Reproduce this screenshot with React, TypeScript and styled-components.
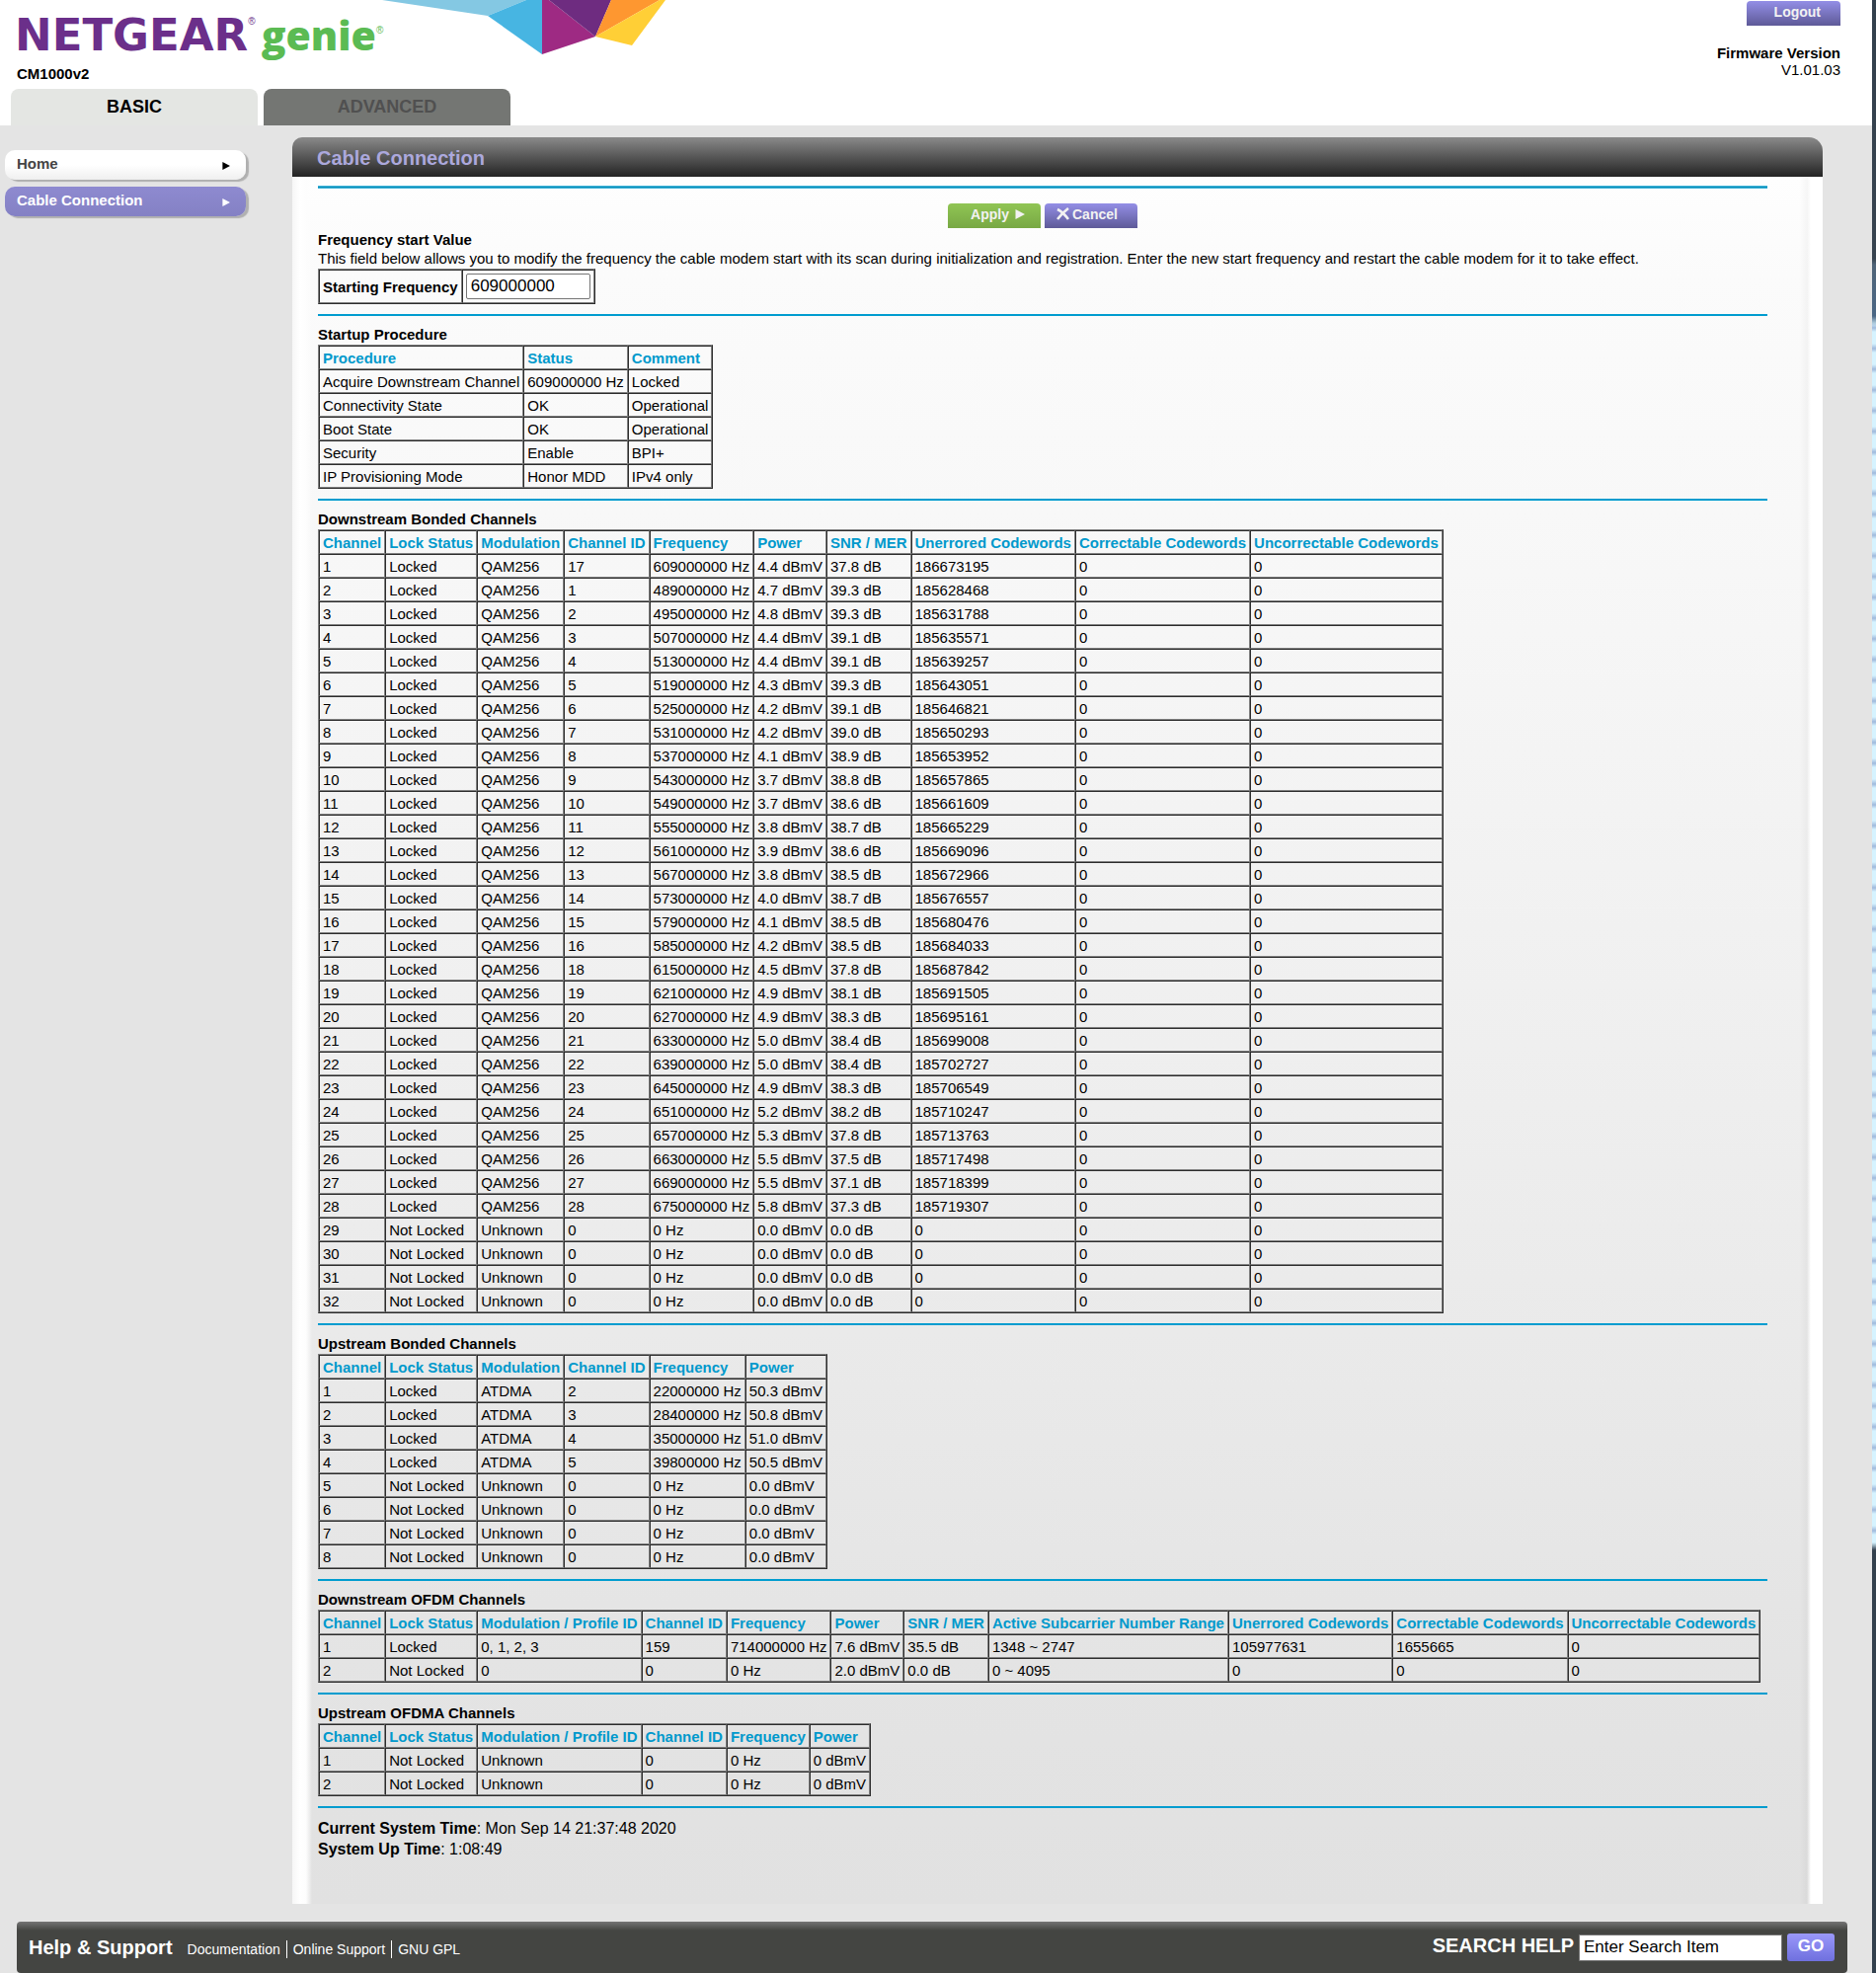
import React from 'react';
import styled, { createGlobalStyle } from 'styled-components';

const sans = '"Liberation Sans", Arial, Helvetica, sans-serif';

const GlobalStyle = createGlobalStyle`
  * { box-sizing: border-box; }
  body {
    margin: 0;
    background: #e4e4e4;
    color: #000;
    font: 15px/19px ${sans};
  }
`;

const Screen = styled.div`
  display: flex;
  min-height: 100vh;
`;

const Page = styled.div`
  flex: 1;
  min-width: 0;
  display: flex;
  flex-direction: column;
`;

const DesktopEdge = styled.div`
  width: 4px;
  background:
    linear-gradient(#33404d 0, #37434f 262px, #4f6478 268px, #4a6684 320px, transparent 330px, transparent 1562px, #33404d 1570px),
    repeating-linear-gradient(#d6f3ff 0, #d6f3ff 12px, #9fb9dc 17px, #d6f3ff 21px);
`;

const Header = styled.header`
  display: flex;
  justify-content: space-between;
  height: 127px;
  background: #fff;
`;

const Brand = styled.div`
  display: flex;
  flex-direction: column;
`;

const LogoRow = styled.div`
  display: flex;
  align-items: flex-start;
  height: 66px;
`;

const Logo = styled.div`
  display: flex;
  align-items: baseline;
  width: 370px;
  padding-left: 15px;
`;

const Netgear = styled.span`
  color: #6b2f8a;
  font: bold 45px/70px "DejaVu Sans", ${sans};
`;

const Genie = styled.span`
  margin-left: 6px;
  color: #5bbb53;
  font: 800 41px/70px "Open Sans", ${sans};
`;

const Mark = styled.sup<{ $color: string; $line: number }>`
  align-self: flex-start;
  color: ${(p) => p.$color};
  font-size: 10px;
  line-height: ${(p) => p.$line}px;
`;

const Prism = styled.svg`
  display: block;
  width: 304px;
  height: 66px;
`;

const Model = styled.div`
  padding-left: 17px;
  font-weight: bold;
  line-height: 18px;
`;

const Tabs = styled.nav`
  display: flex;
  gap: 6px;
  margin-top: auto;
  padding-left: 11px;
`;

const Tab = styled.button<{ $active?: boolean }>`
  width: 250px;
  height: 37px;
  padding: 0 0 2px;
  border: 0;
  border-radius: 8px 8px 0 0;
  background: ${(p) => (p.$active ? '#e4e6e3' : '#747673')};
  color: ${(p) => (p.$active ? '#000' : '#505050')};
  font: bold 18px/20px ${sans};
`;

const Account = styled.div`
  display: flex;
  flex-direction: column;
  align-items: flex-end;
  padding: 1px 32px 0 0;
  line-height: 17px;
`;

const ActionButton = styled.button<{ $green?: boolean }>`
  display: flex;
  align-items: center;
  justify-content: flex-end;
  gap: 6px;
  width: 94px;
  height: 25px;
  padding: 0 16px 4px 12px;
  border: 0;
  border-radius: 4px 4px 0 0;
  background: ${(p) =>
    p.$green ? 'linear-gradient(#90c554, #78a844)' : 'linear-gradient(#938ee6, #5e5a98)'};
  color: #f2f2f2;
  font: bold 14px/16px ${sans};
`;

const CancelButton = styled(ActionButton)`
  justify-content: flex-start;
  gap: 3px;
`;

const LogoutButton = styled(ActionButton)`
  width: 95px;
  padding-right: 20px;
`;

const Firmware = styled.div`
  padding-top: 19px;
  text-align: right;
`;

const Body = styled.div`
  display: flex;
  flex: 1;
  padding: 12px 50px 18px 5px;
`;

const Menu = styled.nav`
  display: flex;
  flex-direction: column;
  gap: 7px;
  width: 291px;
  padding-top: 13px;
`;

const MenuLink = styled.a<{ $active?: boolean }>`
  display: flex;
  align-items: center;
  justify-content: space-between;
  width: 244px;
  height: 30px;
  padding: 0 16px 3px 12px;
  border-radius: 10px;
  background: ${(p) =>
    p.$active ? 'linear-gradient(#8e8ad0, #8481c4)' : 'linear-gradient(#fff 50%, #efefef)'};
  box-shadow: 3px 2px 1px #b0b0b0;
  color: ${(p) => (p.$active ? '#fff' : '#444')};
  font-weight: bold;
  line-height: 18px;
  text-decoration: none;
  svg { margin-top: 4px; }
`;

const Panel = styled.main`
  flex: 1;
  min-width: 0;
  display: flex;
  flex-direction: column;
`;

const PanelTitle = styled.h1`
  height: 40px;
  margin: 0;
  padding-left: 25px;
  border-radius: 10px 14px 0 0;
  background: linear-gradient(#8a8a8a, #232323);
  color: #aca8dc;
  font: bold 20px/42px ${sans};
`;

const PanelBody = styled.div`
  flex: 1;
  padding: 9px 56px 40px 26px;
  background:
    linear-gradient(90deg, #f6f6f6, #fff 8px, #fdfdfd 14px, rgba(255, 255, 255, 0) 20px),
    linear-gradient(270deg, #fff 12px, rgba(0, 0, 0, 0.03) 16px, rgba(0, 0, 0, 0) 24px),
    linear-gradient(#fefefe 0, #fbfbfb 100px, #f8f8f8 340px, #ececec 1060px, #e4e4e4 1500px, #e1e1e1);
`;

const TopRule = styled.hr`
  height: 3px;
  margin: 0;
  border: 0;
  background: linear-gradient(#3fb3d9 1px, #0a8fb9 1px, #0a8fb9 2px, #3fb3d9 2px);
`;

const Rule = styled.hr`
  height: 2px;
  margin: 10px 0;
  border: 0;
  background: #009ccf;
`;

const Actions = styled.div`
  display: flex;
  justify-content: center;
  gap: 4px;
  padding: 15px 0 3px;
`;

const Heading = styled.h2`
  margin: 0;
  padding-bottom: 2px;
  font: bold 15px/17px ${sans};
`;

const Note = styled.p`
  margin: 0;
  padding-bottom: 2px;
  line-height: 17px;
`;

const Grid = styled.table`
  border: 1px outset gray;
  border-spacing: 0;
  line-height: 16px;
  th, td {
    padding: 4px 3px 2px;
    border: 1px inset gray;
    text-align: left;
    white-space: nowrap;
  }
  thead th { color: #0099cc; }
`;

const FieldCell = styled.td`
  && { padding: 3px; }
`;

const FrequencyInput = styled.input`
  display: block;
  width: 126px;
  height: 26px;
  padding: 0 4px;
  border: 1px solid #767676;
  border-radius: 2px;
  background: #fff;
  font: 17px/20px ${sans};
`;

const Times = styled.div`
  font-size: 16px;
  line-height: 21px;
`;

const Footer = styled.footer`
  display: flex;
  align-items: center;
  justify-content: space-between;
  height: 52px;
  margin: 0 25px 0 17px;
  padding: 0 13px 0 12px;
  border-radius: 4px;
  background: linear-gradient(#747474, #444542 9px);
  color: #fff;
`;

const FooterGroup = styled.div<{ $gap: number }>`
  display: flex;
  align-items: center;
  gap: ${(p) => p.$gap}px;
`;

const FooterTitle = styled.strong`
  font-size: 20px;
  line-height: 22px;
`;

const SearchLabel = styled.label`
  padding-bottom: 4px;
  font-size: 20px;
  font-weight: bold;
  line-height: 22px;
`;

const FooterLinks = styled.div`
  display: flex;
  padding-top: 4px;
`;

const FooterLink = styled.a`
  padding: 0 6px;
  border-left: 1px solid #fff;
  color: #fff;
  font-size: 14px;
  line-height: 18px;
  text-decoration: none;
  &:first-child { border-left: 0; }
`;

const SearchInput = styled.input`
  width: 206px;
  height: 27px;
  padding: 0 4px 1px;
  border: 1px solid #767676;
  background: #fff;
  color: #000;
  font: 17px/20px ${sans};
`;

const GoButton = styled.button`
  width: 48px;
  height: 28px;
  padding: 0 0 3px;
  border: 0;
  border-radius: 3px;
  background: linear-gradient(#9a98fa, #6f70de);
  color: #fff;
  font: bold 17px/20px ${sans};
`;

const startup = {
  head: ['Procedure', 'Status', 'Comment'],
  rows: [
    ['Acquire Downstream Channel', '609000000 Hz', 'Locked'],
    ['Connectivity State', 'OK', 'Operational'],
    ['Boot State', 'OK', 'Operational'],
    ['Security', 'Enable', 'BPI+'],
    ['IP Provisioning Mode', 'Honor MDD', 'IPv4 only'],
  ],
};

// channel id, MHz, dBmV, dB, unerrored codewords
const lockedDownstream: [number, number, string, string, number][] = [
  [17, 609, '4.4', '37.8', 186673195],
  [1, 489, '4.7', '39.3', 185628468],
  [2, 495, '4.8', '39.3', 185631788],
  [3, 507, '4.4', '39.1', 185635571],
  [4, 513, '4.4', '39.1', 185639257],
  [5, 519, '4.3', '39.3', 185643051],
  [6, 525, '4.2', '39.1', 185646821],
  [7, 531, '4.2', '39.0', 185650293],
  [8, 537, '4.1', '38.9', 185653952],
  [9, 543, '3.7', '38.8', 185657865],
  [10, 549, '3.7', '38.6', 185661609],
  [11, 555, '3.8', '38.7', 185665229],
  [12, 561, '3.9', '38.6', 185669096],
  [13, 567, '3.8', '38.5', 185672966],
  [14, 573, '4.0', '38.7', 185676557],
  [15, 579, '4.1', '38.5', 185680476],
  [16, 585, '4.2', '38.5', 185684033],
  [18, 615, '4.5', '37.8', 185687842],
  [19, 621, '4.9', '38.1', 185691505],
  [20, 627, '4.9', '38.3', 185695161],
  [21, 633, '5.0', '38.4', 185699008],
  [22, 639, '5.0', '38.4', 185702727],
  [23, 645, '4.9', '38.3', 185706549],
  [24, 651, '5.2', '38.2', 185710247],
  [25, 657, '5.3', '37.8', 185713763],
  [26, 663, '5.5', '37.5', 185717498],
  [27, 669, '5.5', '37.1', 185718399],
  [28, 675, '5.8', '37.3', 185719307],
];

const codewords = ['Unerrored Codewords', 'Correctable Codewords', 'Uncorrectable Codewords'];

const downstream = {
  head: ['Channel', 'Lock Status', 'Modulation', 'Channel ID', 'Frequency', 'Power', 'SNR / MER', ...codewords],
  rows: [
    ...lockedDownstream.map(([id, mhz, power, snr, words], i) => [
      `${i + 1}`, 'Locked', 'QAM256', `${id}`, `${mhz}000000 Hz`, `${power} dBmV`, `${snr} dB`, `${words}`, '0', '0',
    ]),
    ...[29, 30, 31, 32].map((n) => [
      `${n}`, 'Not Locked', 'Unknown', '0', '0 Hz', '0.0 dBmV', '0.0 dB', '0', '0', '0',
    ]),
  ],
};

const upstream = {
  head: ['Channel', 'Lock Status', 'Modulation', 'Channel ID', 'Frequency', 'Power'],
  rows: [
    ['1', 'Locked', 'ATDMA', '2', '22000000 Hz', '50.3 dBmV'],
    ['2', 'Locked', 'ATDMA', '3', '28400000 Hz', '50.8 dBmV'],
    ['3', 'Locked', 'ATDMA', '4', '35000000 Hz', '51.0 dBmV'],
    ['4', 'Locked', 'ATDMA', '5', '39800000 Hz', '50.5 dBmV'],
    ...[5, 6, 7, 8].map((n) => [`${n}`, 'Not Locked', 'Unknown', '0', '0 Hz', '0.0 dBmV']),
  ],
};

const downstreamOfdm = {
  head: ['Channel', 'Lock Status', 'Modulation / Profile ID', 'Channel ID', 'Frequency', 'Power', 'SNR / MER', 'Active Subcarrier Number Range', ...codewords],
  rows: [
    ['1', 'Locked', '0, 1, 2, 3', '159', '714000000 Hz', '7.6 dBmV', '35.5 dB', '1348 ~ 2747', '105977631', '1655665', '0'],
    ['2', 'Not Locked', '0', '0', '0 Hz', '2.0 dBmV', '0.0 dB', '0 ~ 4095', '0', '0', '0'],
  ],
};

const upstreamOfdma = {
  head: ['Channel', 'Lock Status', 'Modulation / Profile ID', 'Channel ID', 'Frequency', 'Power'],
  rows: [
    ['1', 'Not Locked', 'Unknown', '0', '0 Hz', '0 dBmV'],
    ['2', 'Not Locked', 'Unknown', '0', '0 Hz', '0 dBmV'],
  ],
};

type TableData = { head: string[]; rows: string[][] };

function Section({ title, data }: { title: string; data: TableData }) {
  return (
    <section>
      <Heading>{title}</Heading>
      <Grid aria-label={title}>
        <thead>
          <tr>{data.head.map((h) => <th key={h} scope="col">{h}</th>)}</tr>
        </thead>
        <tbody>
          {data.rows.map((row) => (
            <tr key={row[0]}>{row.map((cell, i) => <td key={i}>{cell}</td>)}</tr>
          ))}
        </tbody>
      </Grid>
      <Rule />
    </section>
  );
}

function Arrow({ color, size }: { color: string; size: number }) {
  return (
    <svg width={size} height={size} viewBox="0 0 10 10" aria-hidden="true">
      <path d="M0.5 0 L10 5 L0.5 10 Z" fill={color} />
    </svg>
  );
}

export default function App() {
  return (
    <Screen>
      <GlobalStyle />
      <Page>
        <Header>
          <Brand>
            <LogoRow>
              <Logo>
                <Netgear>NETGEAR</Netgear>
                <Mark $color="#6b2f8a" $line={44}>®</Mark>
                <Genie>genie</Genie>
                <Mark $color="#5bbb53" $line={62}>®</Mark>
              </Logo>
              <Prism viewBox="370 0 304 66" aria-hidden="true">
                <path d="M387 0 H533 L494 16 Z" fill="#84c8e3" />
                <path d="M533 0 H549 V55 L494 16 Z" fill="#47b5e2" />
                <path d="M549 0 H556 L603 37 L549 55 Z" fill="#9e2a83" />
                <path d="M556 0 H619 L603 37 Z" fill="#6e2c80" />
                <path d="M619 0 H668 L603 37 Z" fill="#fe9730" />
                <path d="M668 0 H674 L640 46 L603 37 Z" fill="#ffcf36" />
              </Prism>
            </LogoRow>
            <Model>CM1000v2</Model>
            <Tabs>
              <Tab $active>BASIC</Tab>
              <Tab>ADVANCED</Tab>
            </Tabs>
          </Brand>
          <Account>
            <LogoutButton>Logout</LogoutButton>
            <Firmware>
              <strong>Firmware Version</strong>
              <br />
              V1.01.03
            </Firmware>
          </Account>
        </Header>
        <Body>
          <Menu>
            <MenuLink href="#home">Home <Arrow color="#000" size={8} /></MenuLink>
            <MenuLink href="#cable" $active>Cable Connection <Arrow color="#fff" size={8} /></MenuLink>
          </Menu>
          <Panel>
            <PanelTitle>Cable Connection</PanelTitle>
            <PanelBody>
              <TopRule />
              <Actions>
                <ActionButton $green>Apply <Arrow color="#f2f2f2" size={10} /></ActionButton>
                <CancelButton>
                  <svg width="13" height="13" viewBox="0 0 13 13" aria-hidden="true">
                    <path d="M1 2 C5 4 9 8 12 12 M12 1 C8 4 4 8 1 12" fill="none" stroke="#f2f2f2" strokeWidth="2.6" />
                  </svg>
                  Cancel
                </CancelButton>
              </Actions>
              <Heading>Frequency start Value</Heading>
              <Note>
                This field below allows you to modify the frequency the cable modem start with its scan during
                initialization and registration. Enter the new start frequency and restart the cable modem for it to
                take effect.
              </Note>
              <Grid>
                <tbody>
                  <tr>
                    <th><label htmlFor="freq">Starting Frequency</label></th>
                    <FieldCell><FrequencyInput id="freq" defaultValue="609000000" /></FieldCell>
                  </tr>
                </tbody>
              </Grid>
              <Rule />
              <Section title="Startup Procedure" data={startup} />
              <Section title="Downstream Bonded Channels" data={downstream} />
              <Section title="Upstream Bonded Channels" data={upstream} />
              <Section title="Downstream OFDM Channels" data={downstreamOfdm} />
              <Section title="Upstream OFDMA Channels" data={upstreamOfdma} />
              <Times>
                <div><strong>Current System Time</strong>: Mon Sep 14 21:37:48 2020</div>
                <div><strong>System Up Time</strong>: 1:08:49</div>
              </Times>
            </PanelBody>
          </Panel>
        </Body>
        <Footer>
          <FooterGroup $gap={9}>
            <FooterTitle>Help &amp; Support</FooterTitle>
            <FooterLinks>
              <FooterLink href="#docs">Documentation</FooterLink>
              <FooterLink href="#support">Online Support</FooterLink>
              <FooterLink href="#gpl">GNU GPL</FooterLink>
            </FooterLinks>
          </FooterGroup>
          <FooterGroup $gap={5}>
            <SearchLabel htmlFor="search">SEARCH HELP</SearchLabel>
            <SearchInput id="search" defaultValue="Enter Search Item" />
            <GoButton>GO</GoButton>
          </FooterGroup>
        </Footer>
      </Page>
      <DesktopEdge />
    </Screen>
  );
}
